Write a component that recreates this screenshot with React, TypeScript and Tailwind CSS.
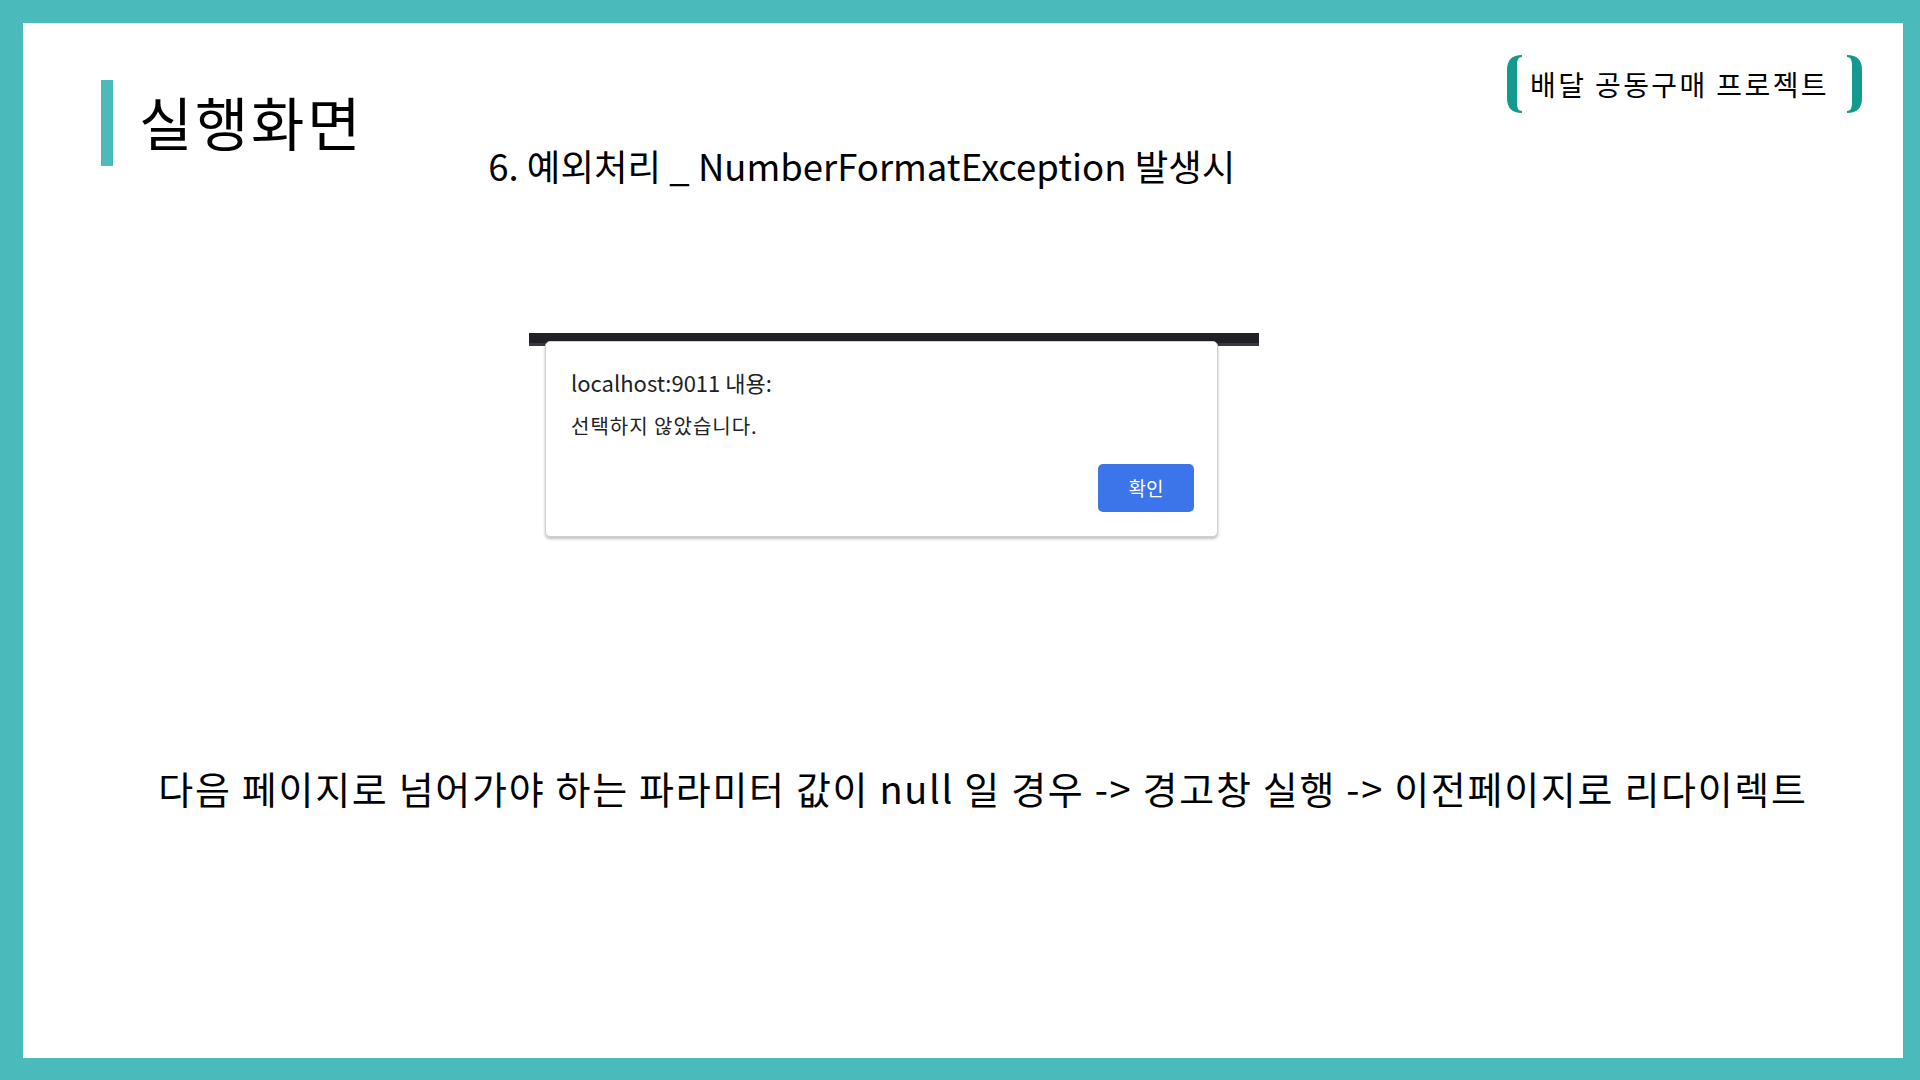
import React from "react";

const font = { fontFamily: '"Noto Sans CJK KR", "Noto Sans", sans-serif' };

function Bracket({ flip }: { flip?: boolean }) {
  return (
    <svg width="15" height="58" viewBox="0 0 15 58" className={flip ? "-scale-x-100" : ""}>
      <path
        d="M15 0 C5 0 0 5 0 15 L0 43 C0 53 5 58 15 58 L15 56 C11.5 56 10 53 10 48 L10 10 C10 5 11.5 2 15 2 Z"
        fill="#14998e"
      />
    </svg>
  );
}

export default function App() {
  return (
    <div
      className="w-[1920px] h-[1080px] bg-[#4bbaba] pt-[23px] pl-[23px] pr-[17px] pb-[22px]"
      style={font}
    >
      <div className="w-full h-full bg-white flex flex-col">
        {/* Header */}
        <div className="flex items-start">
          <div className="flex items-start ml-[78px] mt-[57px]">
            <div className="w-[12px] h-[86px] bg-[#4bbaba]" />
            <div className="ml-[26px] mt-[6px] text-[58px] leading-[70px] text-black tracking-[2.7px]">
              실행화면
            </div>
          </div>
          <div className="ml-[125px] mt-[118px] text-[36.5px] leading-[50px] text-black">
            6. 예외처리 _ NumberFormatException 발생시
          </div>
          <div className="ml-auto mr-[41px] mt-[32px] flex items-center">
            <Bracket />
            <div className="ml-[8px] text-[28px] leading-[40px] tracking-[2.4px] text-black">
              배달 공동구매 프로젝트
            </div>
            <div className="ml-[18px]">
              <Bracket flip />
            </div>
          </div>
        </div>

        {/* Alert dialog screenshot */}
        <div className="ml-[506px] mt-[142px] w-[730px] relative">
          <div className="h-[13px] bg-[#202124] border-b-[3px] border-[#3a3a3a]" />
          <div className="-mt-[5px] ml-[16px] w-[673px] h-[196px] bg-white rounded-[5px] border border-[#d0d0d0] shadow-[0_2px_3px_rgba(0,0,0,0.25)] relative flex flex-col pl-[25px] pr-[23px]">
            <div className="mt-[25px] text-[22px] leading-[30px] text-[#202124]">
              localhost:9011 내용:
            </div>
            <div className="mt-[16px] text-[20px] leading-[26px] tracking-[1px] text-[#202124]">
              선택하지 않았습니다.
            </div>
            <div className="mt-auto mb-[24px] self-end w-[96px] h-[48px] rounded-[5px] bg-[#3c74ea] text-white text-[19px] flex items-center justify-center">
              확인
            </div>
          </div>
        </div>

        {/* Bottom description */}
        <div className="mt-[226px] pl-[40px] text-center text-[38px] leading-[50px] tracking-[1.7px] text-black whitespace-nowrap">
          다음 페이지로 넘어가야 하는 파라미터 값이 null 일 경우 -&gt; 경고창 실행 -&gt; 이전페이지로 리다이렉트
        </div>
      </div>
    </div>
  );
}
